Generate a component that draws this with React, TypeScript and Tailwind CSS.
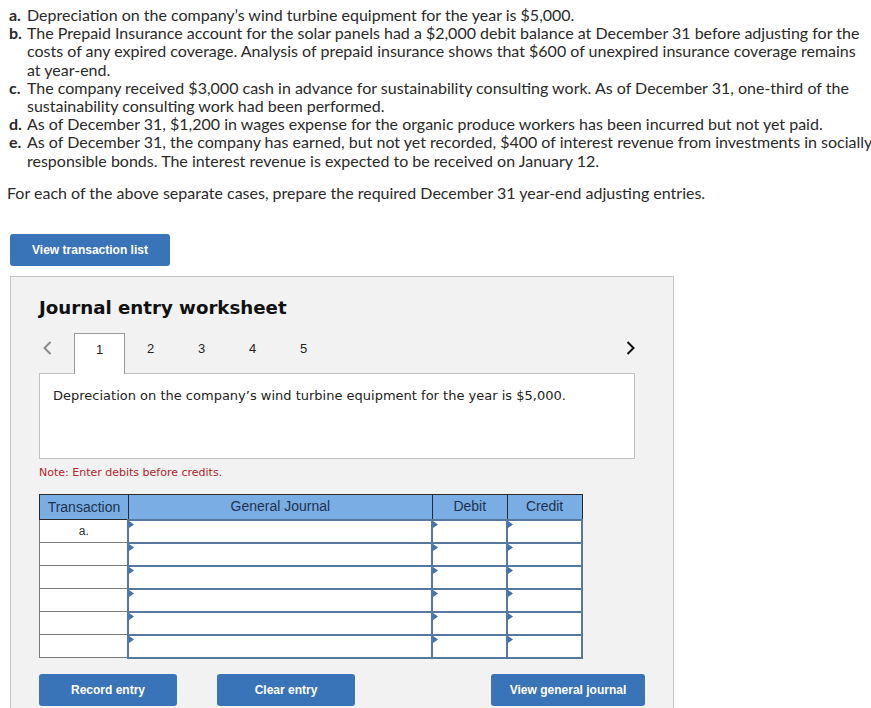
import React from "react";

const items: { label: string; lines: string[] }[] = [
  { label: "a.", lines: ["Depreciation on the company’s wind turbine equipment for the year is $5,000."] },
  {
    label: "b.",
    lines: [
      "The Prepaid Insurance account for the solar panels had a $2,000 debit balance at December 31 before adjusting for the",
      "costs of any expired coverage. Analysis of prepaid insurance shows that $600 of unexpired insurance coverage remains",
      "at year-end.",
    ],
  },
  {
    label: "c.",
    lines: [
      "The company received $3,000 cash in advance for sustainability consulting work. As of December 31, one-third of the",
      "sustainability consulting work had been performed.",
    ],
  },
  {
    label: "d.",
    lines: ["As of December 31, $1,200 in wages expense for the organic produce workers has been incurred but not yet paid."],
  },
  {
    label: "e.",
    lines: [
      "As of December 31, the company has earned, but not yet recorded, $400 of interest revenue from investments in socially",
      "responsible bonds. The interest revenue is expected to be received on January 12.",
    ],
  },
];

function Marker() {
  return (
    <svg className="absolute left-0 top-0" width="5" height="7" viewBox="0 0 5 7">
      <polygon points="0,0 5,3.5 0,7" fill="#3d72b4" />
    </svg>
  );
}

function InputCell() {
  return (
    <td className="relative h-[23px] border-2 border-[#56779e] bg-white p-0">
      <Marker />
    </td>
  );
}

function BlueButton({ children, className = "" }: { children: React.ReactNode; className?: string }) {
  return (
    <button
      className={
        "h-[32px] rounded-[3px] bg-[#3a74b8] text-[12px] font-bold text-white font-['Liberation_Sans',Arial,sans-serif] " +
        className
      }
    >
      {children}
    </button>
  );
}

export default function App() {
  const rows = ["a.", "", "", "", "", ""];
  return (
    <div className="relative h-[708px] w-[871px] overflow-hidden bg-white">
      {/* problem statement */}
      <div className="pl-[9px] pt-[6px] text-[16px] leading-[18.2px] text-[#2a2a2a] font-['Lato',sans-serif]">
        {items.map((it) => (
          <div key={it.label} className="flex">
            <div className="w-[18px] shrink-0 font-bold">{it.label}</div>
            <div>
              {it.lines.map((l) => (
                <div key={l} className="whitespace-nowrap">
                  {l}
                </div>
              ))}
            </div>
          </div>
        ))}
        <div className="mt-[14px] -ml-[2px] whitespace-nowrap">
          For each of the above separate cases, prepare the required December 31 year-end adjusting entries.
        </div>
      </div>

      <div className="pl-[10px] pt-[32px]">
        <BlueButton className="w-[160px]">View transaction list</BlueButton>
      </div>

      {/* worksheet panel */}
      <div className="ml-[10px] mt-[10px] h-[460px] w-[664px] border border-[#c4c4c4] bg-[#f2f2f2] pl-[28px] pt-[19px]">
        <div className="h-[24px] text-[18.2px] font-bold leading-[24px] text-[#111] font-['DejaVu_Sans',Verdana,sans-serif]">
          Journal entry worksheet
        </div>

        {/* tabs */}
        <div className="mt-[13px] flex h-[40px] w-[596px] items-start">
          <div className="flex h-[30px] w-[35px] items-center pl-[4px]">
            <svg width="9" height="14" viewBox="0 0 9 14">
              <polyline points="7.5,1 1.5,7 7.5,13" fill="none" stroke="#8a8a8a" strokeWidth="2" />
            </svg>
          </div>
          {["1", "2", "3", "4", "5"].map((n, i) => (
            <div
              key={n}
              className={
                "relative z-10 flex h-[41px] w-[51px] justify-center pt-[6px] text-[13px] text-[#222] font-['Liberation_Sans',Arial,sans-serif] " +
                (i === 0 ? "border border-b-0 border-[#9a9a9a] bg-white" : "")
              }
            >
              {n}
            </div>
          ))}
          <div className="ml-auto flex h-[30px] items-center">
            <svg width="9" height="14" viewBox="0 0 9 14">
              <polyline points="1.5,1 7.5,7 1.5,13" fill="none" stroke="#111" strokeWidth="2" />
            </svg>
          </div>
        </div>

        <div className="h-[86px] w-[596px] border border-[#c0c0c0] bg-white pl-[13px] pt-[13px] text-[13px] leading-[18px] text-[#222] font-['DejaVu_Sans',Verdana,sans-serif]">
          Depreciation on the company’s wind turbine equipment for the year is $5,000.
        </div>

        <div className="mt-[6px] text-[11px] leading-[16px] text-[#b0262a] font-['DejaVu_Sans',Verdana,sans-serif]">
          Note: Enter debits before credits.
        </div>

        <table className="mt-[13px] w-[544px] border-collapse font-['Liberation_Sans',Arial,sans-serif]">
          <colgroup>
            <col className="w-[89px]" />
            <col className="w-[305px]" />
            <col className="w-[75px]" />
            <col className="w-[75px]" />
          </colgroup>
          <thead>
            <tr className="h-[25px] bg-[#79ade3] text-[14px] text-[#1e3250]">
              <th className="border border-[#2a2a2a] font-normal">Transaction</th>
              <th className="border border-[#2a2a2a] font-normal">General Journal</th>
              <th className="border border-[#2a2a2a] font-normal">Debit</th>
              <th className="border border-[#2a2a2a] font-normal">Credit</th>
            </tr>
          </thead>
          <tbody>
            {rows.map((r, i) => (
              <tr key={i} className="h-[23px]">
                <td className="border border-[#7a7a7a] bg-white p-0 text-center text-[12px] text-[#333]">{r}</td>
                <InputCell />
                <InputCell />
                <InputCell />
              </tr>
            ))}
          </tbody>
        </table>

        <div className="mt-[15px] flex">
          <BlueButton className="w-[138px]">Record entry</BlueButton>
          <BlueButton className="ml-[40px] w-[138px]">Clear entry</BlueButton>
          <BlueButton className="ml-[136px] w-[154px]">View general journal</BlueButton>
        </div>
      </div>
    </div>
  );
}
